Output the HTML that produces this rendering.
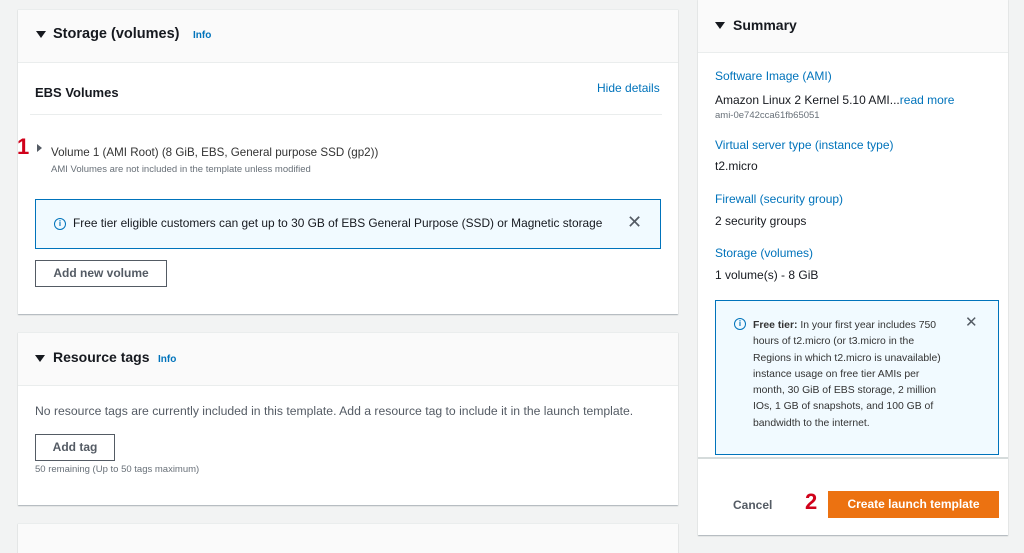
<!DOCTYPE html>
<html><head><style>
*{margin:0;padding:0;box-sizing:border-box}
body{width:1024px;height:543px;background:#f2f3f3;font-family:"Liberation Sans",sans-serif;position:relative;overflow:hidden;color:#16191f}
.a{position:absolute;white-space:nowrap}
.card{position:absolute;background:#fff;box-shadow:0 1px 1px rgba(0,22,40,.3);border-top:1px solid #eaeded}
.hd{position:absolute;left:0;right:0;top:0;background:#fafafa;border-bottom:1px solid #eaeded}
.tri{width:0;height:0;border-left:5px solid transparent;border-right:5px solid transparent;border-top:7px solid #16191f}
.link{color:#0073bb}
.btn{position:absolute;border:1px solid #545b64;background:#fff;font-weight:bold;font-size:12px;color:#545b64;text-align:center}
.sm{font-size:11px;color:#687078}
</style></head><body>

<div class="card" style="left:18px;top:9px;width:660px;height:305px">
 <div class="hd" style="height:53px"></div>
 <div class="a tri" style="left:18px;top:21px"></div>
 <div class="a" style="left:35px;top:16px;font-size:14.5px;font-weight:bold">Storage (volumes)</div>
 <div class="a link" style="left:175px;top:20px;font-size:10px;font-weight:bold">Info</div>
 <div class="a" style="left:17px;top:75px;font-size:13px;font-weight:bold">EBS Volumes</div>
 <div class="a link" style="left:579px;top:71px;font-size:12px">Hide details</div>
 <div class="a" style="left:12px;top:104px;width:632px;height:1px;background:#eaeded"></div>
 <div class="a" style="left:19px;top:134px;width:0;height:0;border-top:4px solid transparent;border-bottom:4px solid transparent;border-left:5px solid #545b64"></div>
 <div class="a" style="left:33px;top:136px;font-size:11.6px;color:#333">Volume 1 (AMI Root) (8 GiB, EBS, General purpose SSD (gp2))</div>
 <div class="a sm" style="left:33px;top:154px;font-size:9.5px">AMI Volumes are not included in the template unless modified</div>
 <div class="a" style="left:17px;top:189px;width:626px;height:50px;background:#f1faff;border:1px solid #0073bb"></div>
 <div class="a" style="left:36px;top:208px;width:12px;height:12px;border:1.5px solid #0073bb;border-radius:50%;font-size:8px;color:#0073bb;font-weight:bold;text-align:center;line-height:9px">i</div>
 <div class="a" style="left:55px;top:206px;font-size:11.9px">Free tier eligible customers can get up to 30 GB of EBS General Purpose (SSD) or Magnetic storage</div>
 <div class="a" style="left:609px;top:202px;font-size:18px;color:#545b64">✕</div>
 <div class="btn" style="left:17px;top:250px;width:132px;height:27px;line-height:24px">Add new volume</div>
</div>
<div class="a" style="left:17px;top:134px;font-size:22px;font-weight:bold;color:#d0021b">1</div>

<div class="card" style="left:18px;top:332px;width:660px;height:173px">
 <div class="hd" style="height:53px"></div>
 <div class="a tri" style="left:17px;top:22px"></div>
 <div class="a" style="left:35px;top:16px;font-size:14px;font-weight:bold">Resource tags</div>
 <div class="a link" style="left:140px;top:21px;font-size:10px;font-weight:bold">Info</div>
 <div class="a" style="left:17px;top:71px;font-size:12.2px;color:#545b64">No resource tags are currently included in this template. Add a resource tag to include it in the launch template.</div>
 <div class="btn" style="left:17px;top:101px;width:80px;height:27px;line-height:24px">Add tag</div>
 <div class="a sm" style="left:17px;top:131px;font-size:9.5px">50 remaining (Up to 50 tags maximum)</div>
</div>
<div class="card" style="left:18px;top:523px;width:660px;height:30px;background:#fafafa"></div>

<div class="card" style="left:698px;top:-1px;width:310px;height:536px">
 <div class="hd" style="height:53px"></div>
 <div class="a tri" style="left:17px;top:22px"></div>
 <div class="a" style="left:35px;top:17px;font-size:14px;font-weight:bold">Summary</div>
 <div class="a link" style="left:17px;top:69px;font-size:12px">Software Image (AMI)</div>
 <div class="a" style="left:17px;top:93px;font-size:12px">Amazon Linux 2 Kernel 5.10 AMI...<span class="link">read more</span></div>
 <div class="a sm" style="left:17px;top:110px;font-size:9.5px">ami-0e742cca61fb65051</div>
 <div class="a link" style="left:17px;top:138px;font-size:12px">Virtual server type (instance type)</div>
 <div class="a" style="left:17px;top:159px;font-size:12px">t2.micro</div>
 <div class="a link" style="left:17px;top:192px;font-size:12px">Firewall (security group)</div>
 <div class="a" style="left:17px;top:214px;font-size:12px">2 security groups</div>
 <div class="a link" style="left:17px;top:246px;font-size:12px">Storage (volumes)</div>
 <div class="a" style="left:17px;top:268px;font-size:12px">1 volume(s) - 8 GiB</div>
 <div class="a" style="left:17px;top:300px;width:284px;height:155px;background:#f1faff;border:1px solid #0073bb"></div>
 <div class="a" style="left:36px;top:318px;width:12px;height:12px;border:1.5px solid #0073bb;border-radius:50%;font-size:8px;color:#0073bb;font-weight:bold;text-align:center;line-height:9px">i</div>
 <div class="a" style="left:55px;top:318px;font-size:10.4px;line-height:16.3px;color:#333;white-space:normal;width:196px"><b>Free tier:</b> In your first year includes 750 hours of t2.micro (or t3.micro in the Regions in which t2.micro is unavailable) instance usage on free tier AMIs per month, 30 GiB of EBS storage, 2 million IOs, 1 GB of snapshots, and 100 GB of bandwidth to the internet.</div>
 <div class="a" style="left:267px;top:313px;font-size:15px;color:#545b64">✕</div>
 <div class="a" style="left:0;top:457px;width:310px;height:2px;background:#d5dbdb"></div>
 <div class="a" style="left:35px;top:498px;font-size:12px;font-weight:bold;color:#545b64">Cancel</div>
 <div class="a" style="left:130px;top:491px;width:171px;height:27px;background:#ec7211;color:#fff;font-size:12px;font-weight:bold;text-align:center;line-height:27px">Create launch template</div>
</div>
<div class="a" style="left:805px;top:489px;font-size:22px;font-weight:bold;color:#d0021b">2</div>
</body></html>
